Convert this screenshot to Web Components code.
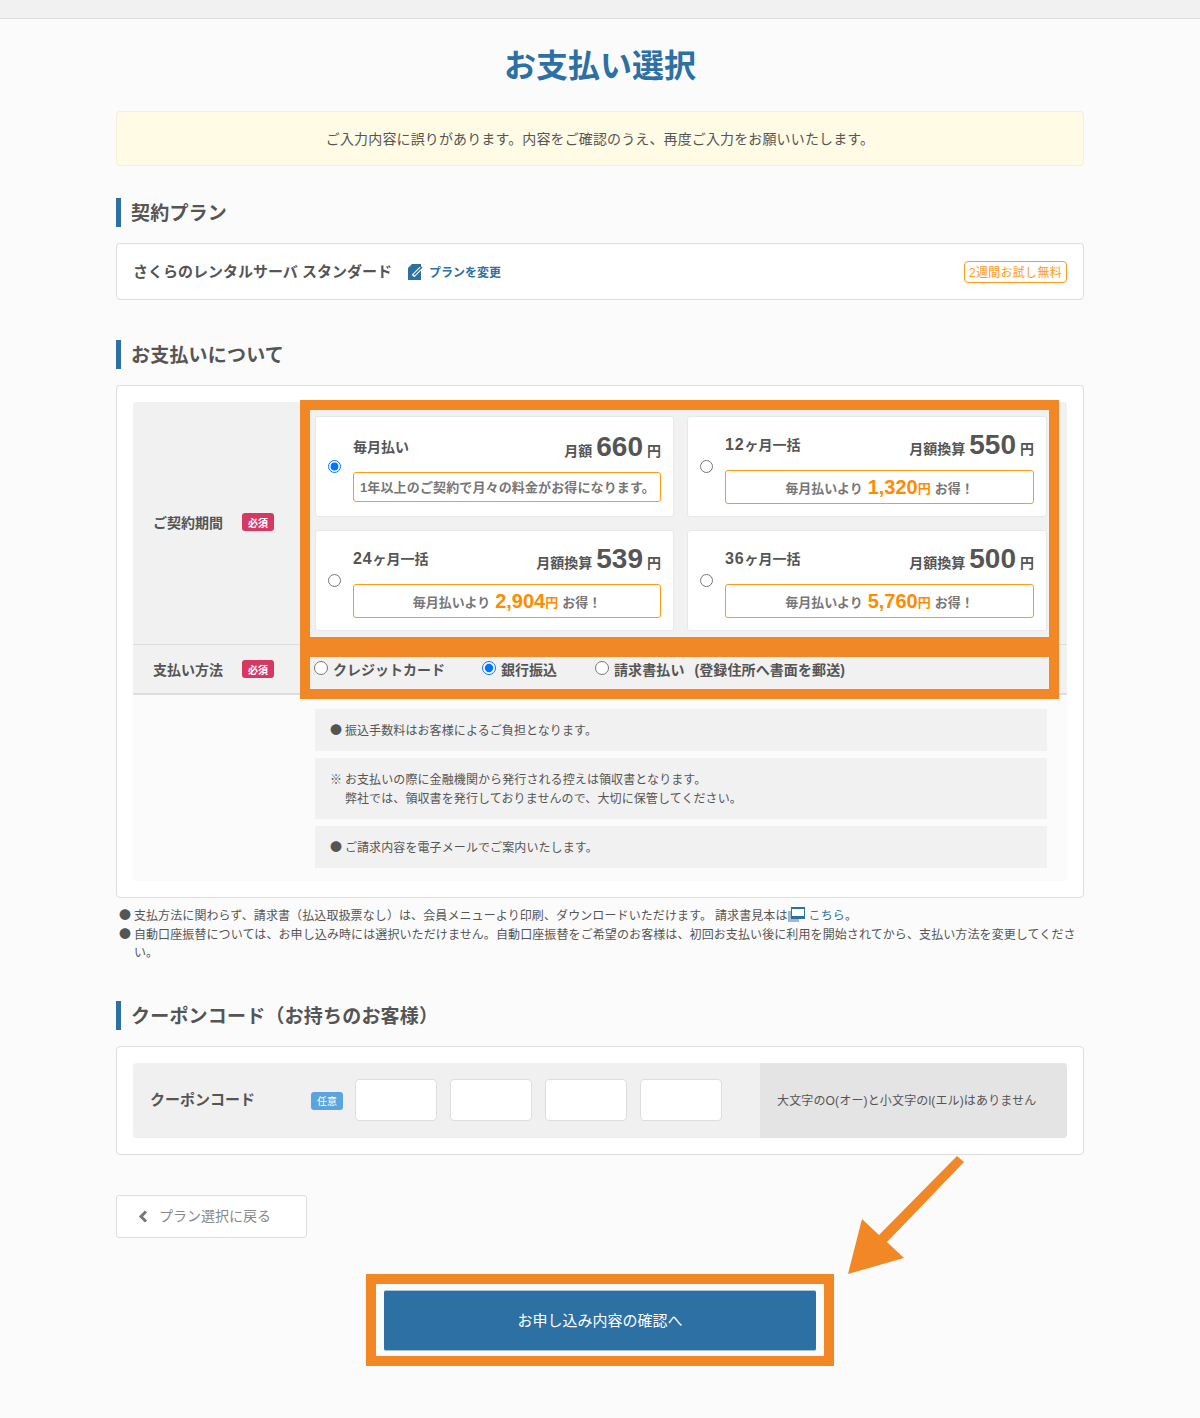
<!DOCTYPE html>
<html lang="ja">
<head>
<meta charset="utf-8">
<title>お支払い選択</title>
<style>
html, body { margin: 0; padding: 0; background: #fbfbfb; }
body { font-family: "Liberation Sans", "Noto Sans CJK JP", sans-serif; color: #555; }
</style>
</head>
<body>
<payment-page></payment-page>
<script>
// plain tags only: a rule from the outer shadow would beat :host of nested elements
const BASE = `
  :host, h1, div, p, span, a, label, input, button, b, i, svg { box-sizing: border-box; margin: 0; padding: 0; }
`;

class PageTitle extends HTMLElement {
  constructor() {
    super();
    this.attachShadow({ mode: "open" }).innerHTML = `
    <style>${BASE}
      :host { display: flex; height: 92px; padding-top: 2px; align-items: center; justify-content: center; }
      h1 { font-size: 32px; font-weight: 700; color: #2c70a4; line-height: 1; }
    </style>
    <h1><slot></slot></h1>`;
  }
}

class AlertBox extends HTMLElement {
  constructor() {
    super();
    this.attachShadow({ mode: "open" }).innerHTML = `
    <style>${BASE}
      :host {
        display: flex; height: 55px; padding-bottom: 2px; align-items: center; justify-content: center;
        background: #fffbe5; border: 1px solid #f6f0d4; border-radius: 4px;
        font-size: 14px; letter-spacing: .13px; color: #555;
      }
    </style>
    <slot></slot>`;
  }
}

class SectionHeading extends HTMLElement {
  constructor() {
    super();
    this.attachShadow({ mode: "open" }).innerHTML = `
    <style>${BASE}
      :host {
        display: flex; align-items: center; height: 29px; padding: 0 0 2px 10px;
        border-left: 5px solid #2c70a4;
        font-size: 19px; font-weight: 700; letter-spacing: .2px; color: #555;
      }
    </style>
    <slot></slot>`;
  }
}

class PanelBox extends HTMLElement {
  constructor() {
    super();
    this.attachShadow({ mode: "open" }).innerHTML = `
    <style>${BASE}
      :host {
        display: block; margin-top: 16px; background: #fff;
        border: 1px solid #ddd; border-radius: 4px;
      }
    </style>
    <slot></slot>`;
  }
}

class PlanSummary extends HTMLElement {
  constructor() {
    super();
    this.attachShadow({ mode: "open" }).innerHTML = `
    <style>${BASE}
      :host { display: flex; align-items: center; height: 55px; padding: 0 16px; }
      .name { padding-bottom: 2px; font-size: 15px; font-weight: 700; color: #555; }
      a { display: flex; align-items: center; gap: 6px; margin-left: 15px; font-size: 12px; font-weight: 700; color: #2c70a4; text-decoration: none; }
      .trial {
        margin-left: auto; height: 22px; padding: 0 4px; display: flex; align-items: center;
        border: 1px solid #ff9a1a; border-radius: 4px; font-size: 12px; letter-spacing: .3px; color: #ff9a1a; background: #fff;
      }
    </style>
    <span class="name">さくらのレンタルサーバ スタンダード</span>
    <a href="#">
      <svg width="16" height="18" viewBox="0 0 16 18"><path fill="#2c70a4" d="M1 5 5 1h9v16H1z"/><path d="M6 13 14 5" stroke="#fff" stroke-width="3.500"/><path d="M7 12 15 4" stroke="#2c70a4" stroke-width="1.600"/></svg>
      プランを変更
    </a>
    <span class="trial">2週間お試し無料</span>`;
  }
}

class ReqBadge extends HTMLElement {
  constructor() {
    super();
    const tone = this.getAttribute("tone");
    this.attachShadow({ mode: "open" }).innerHTML = `
    <style>${BASE}
      :host {
        display: inline-flex; width: 32px; height: 18px; align-items: center; justify-content: center;
        background: ${tone === "blue" ? "#5aa5e0" : "#d63864"}; border-radius: 3px;
        color: #fff; font-size: 10px; font-weight: ${tone === "blue" ? 400 : 700};
      }
    </style>
    <slot></slot>`;
  }
}

class TermOption extends HTMLElement {
  constructor() {
    super();
    const checked = this.hasAttribute("checked") ? "checked" : "";
    const name = this.getAttribute("name").replace(/\d+/, "<span class='num'>$&</span>");
    this.attachShadow({ mode: "open" }).innerHTML = `
    <style>${BASE}
      :host {
        display: flex; align-items: center; height: 101px; padding: 0 12px;
        background: #fff; border: 1px solid #e8e8e8; border-radius: 3px;
      }
      input { width: 13px; height: 13px; margin: 0 12px 0 0; flex: none; }
      .body { flex: 1; min-width: 0; }
      .row { display: flex; align-items: center; justify-content: space-between; height: 32px; margin-bottom: 9px; }
      .name { padding-bottom: 2px; font-size: 14px; font-weight: 700; color: #555; }
      .num { font-size: 16px; letter-spacing: .9px; }
      .price { display: flex; align-items: baseline; font-size: 14px; font-weight: 700; color: #555; }
      .price b { font-size: 28px; margin: 0 4px; }
      .note {
        display: flex; align-items: center; justify-content: center; height: 34px; padding-bottom: 2px;
        border: 1px solid #ff9a1a; border-radius: 3px; font-size: 13px; font-weight: 700; letter-spacing: .13px; color: #777;
      }
      :host([plain]) .note { height: 30px; justify-content: flex-start; padding-left: 6px; }
    </style>
    <input type="radio" name="term" ${checked}>
    <div class="body">
      <div class="row">
        <span class="name">${name}</span>
        <span class="price">${this.getAttribute("unit")}<b>${this.getAttribute("price")}</b>円</span>
      </div>
      <div class="note"><slot></slot></div>
    </div>`;
  }
}

class SaveText extends HTMLElement {
  constructor() {
    super();
    this.attachShadow({ mode: "open" }).innerHTML = `
    <style>${BASE}
      :host { display: inline-flex; align-items: baseline; letter-spacing: 0; }
      b { font-size: 20px; color: #ff8c00; margin-left: 5px; transform: translateY(1px); }
      i { font-style: normal; color: #ff8c00; margin-right: 4px; }
    </style>
    毎月払いより<b><slot></slot></b><i>円</i>お得！`;
  }
}

class FormRow extends HTMLElement {
  constructor() {
    super();
    this.attachShadow({ mode: "open" }).innerHTML = `
    <style>${BASE}
      :host { display: grid; grid-template-columns: 167px 1fr; background: #f1f1f1; }
      .label { display: flex; align-items: center; padding: 0 0 var(--label-pb, 0) 20px; font-size: 14px; font-weight: 700; color: #555; }
      .label span { width: 89px; }
      .value { min-width: 0; }
    </style>
    <div class="label"><span>${this.getAttribute("label") || ""}</span><slot name="badge"></slot></div>
    <div class="value"><slot></slot></div>`;
  }
}

class NoteBox extends HTMLElement {
  constructor() {
    super();
    this.attachShadow({ mode: "open" }).innerHTML = `
    <style>${BASE}
      :host {
        display: block; padding: 10.500px 15px 12.500px; background: #f1f1f1;
        font-family: "Noto Sans CJK JP", sans-serif;
        font-size: 12px; line-height: 19px; letter-spacing: .1px; color: #555;
      }
    </style>
    <slot></slot>`;
  }
}

class CouponRow extends HTMLElement {
  constructor() {
    super();
    this.attachShadow({ mode: "open" }).innerHTML = `
    <style>${BASE}
      :host {
        display: flex; height: 75px; margin: 16px; background: #f0f0f0; border-radius: 4px; overflow: hidden;
      }
      .main { display: flex; align-items: center; width: 627px; padding-left: 17px; }
      .label { width: 161px; padding-bottom: 4px; font-size: 15px; font-weight: 700; color: #555; }
      .inputs { display: flex; gap: 13px; margin: 0 0 1px 12px; }
      input { width: 82px; height: 42px; background: #fff; border: 1px solid #ddd; border-radius: 4px; }
      .help { flex: 1; display: flex; align-items: center; padding: 0 0 2px 17px; background: #e4e4e4; font-size: 12px; letter-spacing: .15px; color: #555; }
    </style>
    <div class="main">
      <span class="label">クーポンコード</span>
      <req-badge tone="blue">任意</req-badge>
      <div class="inputs">
        <input type="text" aria-label="1"><input type="text" aria-label="2"><input type="text" aria-label="3"><input type="text" aria-label="4">
      </div>
    </div>
    <div class="help">大文字のO(オー)と小文字のl(エル)はありません</div>`;
  }
}

class PaymentPage extends HTMLElement {
  constructor() {
    super();
    this.attachShadow({ mode: "open" }).innerHTML = `
    <style>${BASE}
      :host { display: block; position: relative; height: 1418px; overflow: hidden; }
      .topbar { height: 19px; background: #f1f1f1; border-bottom: 1px solid #ddd; }
      .wrap { width: 968px; margin: 0 auto; }
      section-heading.h1 { margin-top: 32px; }
      section-heading.h2 { margin-top: 40px; }
      section-heading.h3 { margin-top: 39px; }
      .sheet { margin: 16px; border-radius: 4px; overflow: hidden; background: #fbfbfb; }
      .terms { display: grid; grid-template-columns: 359px 360px; gap: 13px; padding: 14px 20px 13px 15px; }
      .row1 { border-bottom: 1px solid #ddd; --label-pb: 2px; }
      .row2 { height: 50px; border-bottom: 2px solid #ddd; }
      .pay { display: flex; align-items: center; height: 48px; padding-left: 14px; font-size: 14px; font-weight: 700; color: #555; }
      .pay label { display: flex; align-items: center; }
      .pay input { width: 14px; height: 14px; margin: -2px 5px 0 0; flex: none; }
      .pay label:nth-child(1) { width: 168px; }
      .pay label:nth-child(2) { width: 113px; }
      .pay label:nth-child(3) { word-spacing: 1px; letter-spacing: .1px; }
      .notes { display: flex; flex-direction: column; gap: 7px; padding: 14px 20px 13px 182px; }
      .foot { margin-top: 8px; padding-left: 18px; font-family: "Noto Sans CJK JP", sans-serif; font-size: 12px; line-height: 18.700px; letter-spacing: .1px; color: #555; }
      .foot p { text-indent: -15px; }
      .foot a { color: #2c70a4; text-decoration: none; }
      .foot svg { vertical-align: -2px; margin-right: 4px; }
      .back {
        display: flex; align-items: center; width: 191px; height: 43px; margin-top: 40px; padding: 0 0 3px 21px;
        background: #fff; border: 1px solid #ddd; border-radius: 3px;
        font-size: 14px; color: #888; text-decoration: none;
      }
      .back svg { margin: 3px 11px 0 0; }
      .submit {
        display: flex; align-items: center; justify-content: center; width: 432px; height: 61px; margin: 52px auto 0; padding-bottom: 3px;
        background: #2c70a4; border: solid #a9c5da; border-width: 1px 0; border-radius: 2px;
        font: inherit; font-size: 15px; color: #fff;
      }
      .mark { position: absolute; border: 10px solid #f18825; pointer-events: none; }
      .m1 { left: 300px; top: 400px; width: 759px; height: 247px; }
      .m2 { left: 300px; top: 647px; width: 759px; height: 52px; }
      .m3 { left: 366px; top: 1274px; width: 468px; height: 92px; }
      .arrow { position: absolute; left: 0; top: 0; pointer-events: none; }
    </style>
    <div class="topbar"></div>
    <div class="wrap">
      <page-title>お支払い選択</page-title>
      <alert-box>ご入力内容に誤りがあります。内容をご確認のうえ、再度ご入力をお願いいたします。</alert-box>

      <section-heading class="h1">契約プラン</section-heading>
      <panel-box><plan-summary></plan-summary></panel-box>

      <section-heading class="h2">お支払いについて</section-heading>
      <panel-box>
        <div class="sheet">
          <form-row class="row1" label="ご契約期間">
            <req-badge slot="badge">必須</req-badge>
            <div class="terms">
              <term-option checked plain name="毎月払い" unit="月額" price="660">1年以上のご契約で月々の料金がお得になります。</term-option>
              <term-option name="12ヶ月一括" unit="月額換算" price="550"><save-text>1,320</save-text></term-option>
              <term-option name="24ヶ月一括" unit="月額換算" price="539"><save-text>2,904</save-text></term-option>
              <term-option name="36ヶ月一括" unit="月額換算" price="500"><save-text>5,760</save-text></term-option>
            </div>
          </form-row>
          <form-row class="row2" label="支払い方法">
            <req-badge slot="badge">必須</req-badge>
            <div class="pay">
              <label><input type="radio" name="pay">クレジットカード</label>
              <label><input type="radio" name="pay" checked>銀行振込</label>
              <label><input type="radio" name="pay">請求書払い &nbsp;(登録住所へ書面を郵送)</label>
            </div>
          </form-row>
          <div class="notes">
            <note-box>● 振込手数料はお客様によるご負担となります。</note-box>
            <note-box>※ お支払いの際に金融機関から発行される控えは領収書となります。<br>&emsp;&nbsp;弊社では、領収書を発行しておりませんので、大切に保管してください。</note-box>
            <note-box>● ご請求内容を電子メールでご案内いたします。</note-box>
          </div>
        </div>
      </panel-box>
      <div class="foot">
        <p>● 支払方法に関わらず、請求書（払込取扱票なし）は、会員メニューより印刷、ダウンロードいただけます。 請求書見本は<a href="#"><svg width="17" height="15" viewBox="0 0 17 15"><rect x="0" y="4" width="11" height="11" fill="#9db8cf"/><rect x="3.500" y="0.500" width="13" height="11" fill="#fff" stroke="#2c70a4"/><rect x="3" y="9" width="14" height="3" fill="#2c70a4"/><rect x="3" y="0" width="14" height="2" fill="#2c70a4"/></svg>こちら</a>。</p>
        <p>● 自動口座振替については、お申し込み時には選択いただけません。自動口座振替をご希望のお客様は、初回お支払い後に利用を開始されてから、支払い方法を変更してください。</p>
      </div>

      <section-heading class="h3">クーポンコード（お持ちのお客様）</section-heading>
      <panel-box><coupon-row></coupon-row></panel-box>

      <a class="back" href="#">
        <svg width="10" height="13" viewBox="0 0 10 13"><path d="M8 1.500 3 6.500l5 5" fill="none" stroke="#777" stroke-width="3"/></svg>
        プラン選択に戻る
      </a>
      <button class="submit" type="button">お申し込み内容の確認へ</button>
    </div>
    <div class="mark m1"></div>
    <div class="mark m2"></div>
    <div class="mark m3"></div>
    <svg class="arrow" width="1200" height="1418" viewBox="0 0 1200 1418"><polygon fill="#f18825" points="957,1156 964,1162 887,1242 904,1258 848,1274 862,1219 879,1235"/></svg>`;
  }
}

customElements.define("page-title", PageTitle);
customElements.define("alert-box", AlertBox);
customElements.define("section-heading", SectionHeading);
customElements.define("panel-box", PanelBox);
customElements.define("plan-summary", PlanSummary);
customElements.define("req-badge", ReqBadge);
customElements.define("term-option", TermOption);
customElements.define("save-text", SaveText);
customElements.define("form-row", FormRow);
customElements.define("note-box", NoteBox);
customElements.define("coupon-row", CouponRow);
customElements.define("payment-page", PaymentPage);
</script>
</body>
</html>
